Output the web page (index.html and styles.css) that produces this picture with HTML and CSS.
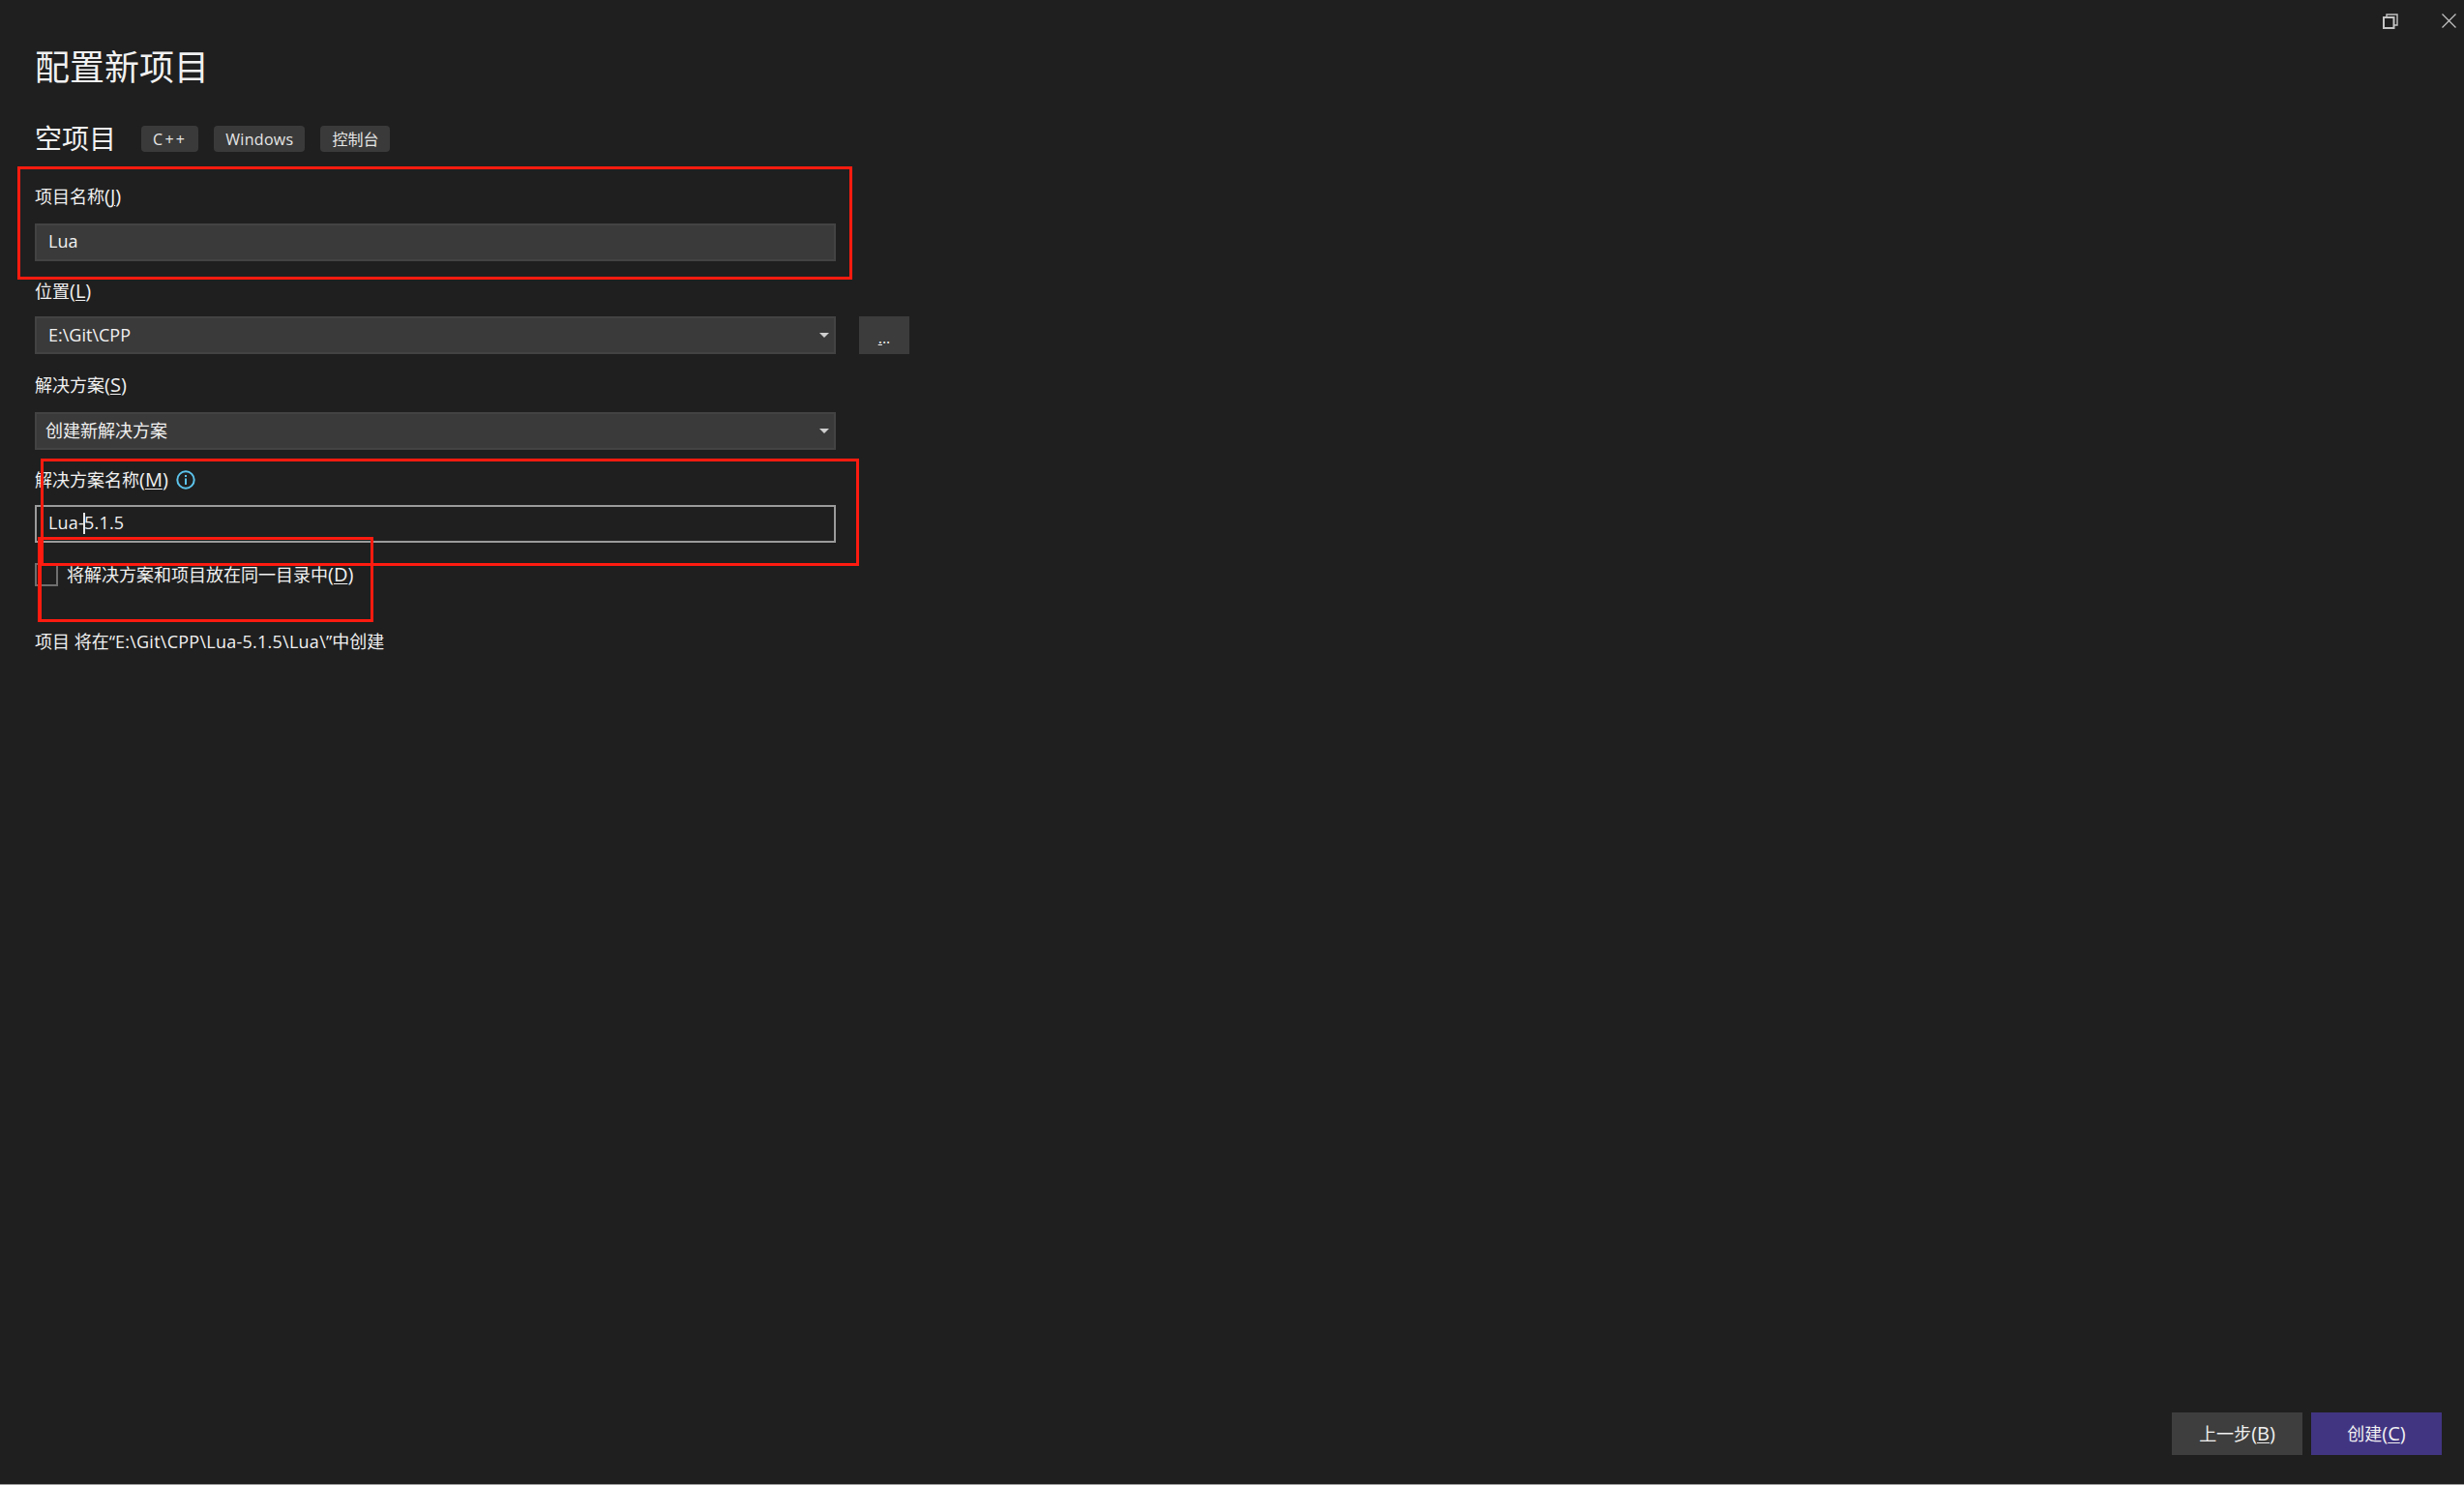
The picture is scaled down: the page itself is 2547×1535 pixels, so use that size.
FILE: index.html
```html
<!DOCTYPE html>
<html lang="zh-CN">
<head>
<meta charset="utf-8">
<title>配置新项目</title>
<link rel="stylesheet" href="styles.css">
</head>
<body>
<div class="page">
  <div class="topbar">
    <svg class="win-icon" width="16" height="16" viewBox="0 0 16 16" fill="none" stroke="#c4c4c4" stroke-width="1.4"><path d="M4 3.500V1h11v11h-3"/><rect x="1" y="4" width="10.500" height="11" fill="#1f1f1f" stroke-width="2"/></svg>
    <svg class="win-icon" width="15" height="15" viewBox="0 0 15 15" fill="none" stroke="#c4c4c4" stroke-width="1.2"><path d="M.5.5l14 14M14.500.5l-14 14"/></svg>
  </div>

  <main class="content">
    <h1 class="title">配置新项目</h1>
    <div class="template">
      <h2 class="template-name">空项目</h2>
      <span class="tag tag-spaced">C++</span>
      <span class="tag tag-latin">Windows</span>
      <span class="tag">控制台</span>
    </div>

    <div class="field field-first">
      <label class="label label-wide">项目名称<span class="key">(<u>J</u>)</span></label>
      <div class="control"><span>Lua</span></div>
    </div>

    <div class="field">
      <label class="label">位置<span class="key">(<u>L</u>)</span></label>
      <div class="control-row">
        <div class="control select select-path"><span>E:\Git\CPP</span><i class="arrow"></i></div>
        <div class="browse"><u>.</u>..</div>
      </div>
    </div>

    <div class="field">
      <label class="label label-wide">解决方案<span class="key">(<u>S</u>)</span></label>
      <div class="control select select-tight"><span>创建新解决方案</span><i class="arrow"></i></div>
    </div>

    <div class="field">
      <label class="label">解决方案名称<span class="key">(<u>M</u>)</span>
        <svg class="info" width="20" height="20" viewBox="0 0 20 20" fill="none"><circle cx="10" cy="10" r="8.700" stroke="#5cc4ec" stroke-width="2"/><rect x="9" y="8.500" width="2" height="6.500" fill="#5cc4ec"/><rect x="9" y="5" width="2" height="2" fill="#5cc4ec"/></svg>
      </label>
      <div class="control focused"><span class="spaced">Lua-<b class="caret"></b>5.1.5</span></div>
    </div>

    <div class="check-row">
      <span class="checkbox"></span>
      <span>将解决方案和项目放在同一目录中<span class="key">(<u>D</u>)</span></span>
    </div>

    <p class="hint">项目 将在“<span class="hint-path">E:\Git\CPP\Lua-5.1.5\Lua\</span>”中创建</p>
  </main>

  <footer class="footer">
    <div class="btn">上一步<span class="key">(<u>B</u>)</span></div>
    <div class="btn btn-primary">创建<span class="key">(<u>C</u>)</span></div>
  </footer>

  <div class="mark mark-name"></div>
  <div class="mark mark-solution"></div>
  <div class="mark mark-check"></div>
</div>
</body>
</html>
```

FILE: styles.css
```css
* { box-sizing: border-box; }
html, body { margin: 0; padding: 0; }
body {
  background: #1f1f1f;
  color: #f1f1f1;
  font-family: "Open Sans", "Noto Sans CJK SC", sans-serif;
  font-size: 18px;
}
.page {
  position: relative;
  width: 2547px;
  height: 1535px;
  display: flex;
  flex-direction: column;
  overflow: hidden;
}
.topbar {
  height: 44px;
  flex: none;
  display: flex;
  justify-content: flex-end;
  align-items: flex-start;
  gap: 45px;
  padding: 14px 8px 0 0;
}
.content { padding-left: 36px; flex: none; }
.title {
  margin: 0;
  height: 48px;
  padding-top: 2px;
  line-height: 48px;
  font-size: 36px;
  font-weight: 400;
}
.template {
  margin-top: 38px;
  height: 27px;
  display: flex;
  align-items: center;
}
.template-name {
  margin: 0 26px 0 0;
  font-size: 28px;
  font-weight: 400;
  line-height: 27px;
}
.tag {
  height: 27px;
  line-height: 28px;
  padding: 0 12px;
  margin-right: 16px;
  background: #3a3a3a;
  border-radius: 4px;
  font-size: 16px;
  color: #e6e6e6;
}
.tag-spaced { letter-spacing: 2.300px; }
.tag-latin { letter-spacing: 0.300px; }
.field { margin-top: 19px; }
.field-first { margin-top: 33px; }
.label {
  display: flex;
  align-items: center;
  height: 26px;
  padding-bottom: 2px;
  line-height: 24px;
  margin-bottom: 12px;
}
.label-wide { margin-bottom: 15px; padding-bottom: 0; }
.key { font-size: 20px; }
.key u { text-underline-offset: 2px; text-decoration-thickness: 1px; }
.info { margin-left: 8px; }
.control {
  width: 828px;
  height: 39px;
  display: flex;
  align-items: center;
  padding: 0 12px 4px;
  background: #3a3a3a;
  border: 2px solid #434343;
}
.select { justify-content: space-between; padding-right: 5px; }
.select-path { padding-bottom: 2px; }
.select-tight { padding-left: 9px; }
.arrow {
  width: 0;
  height: 0;
  border-left: 5px solid transparent;
  border-right: 5px solid transparent;
  border-top: 5px solid #cfcfcf;
  margin-top: 2px;
}
.select-tight .arrow { margin-top: 4px; }
.control-row { display: flex; gap: 24px; }
.browse {
  width: 52px;
  height: 39px;
  background: #3c3c3c;
  display: flex;
  justify-content: center;
  align-items: flex-end;
  font-size: 16px;
  line-height: 22px;
  padding-bottom: 6px;
}
.focused {
  background: #1f1f1f;
  border-color: #9b9b9b;
}
.spaced { letter-spacing: 0.200px; }
.caret {
  display: inline-block;
  width: 2px;
  height: 22px;
  margin: 0 -1px 0 -1px;
  background: #e8e8e8;
  vertical-align: -5px;
}
.check-row {
  margin-top: 21px;
  height: 24px;
  display: flex;
  align-items: center;
  gap: 9px;
  line-height: 22px;
}
.checkbox {
  width: 24px;
  height: 24px;
  border: 2px solid #6f6f6f;
}
.hint {
  margin: 45px 0 0;
  height: 26px;
  line-height: 24px;
}
.hint-path { letter-spacing: 0.250px; }
.footer {
  margin-top: auto;
  display: flex;
  justify-content: flex-end;
  gap: 9px;
  padding: 0 23px 30px 0;
  border-bottom: 1px solid #a0a0a0;
}
.btn {
  width: 135px;
  height: 44px;
  line-height: 44px;
  text-align: center;
  background: #3e3e3e;
}
.btn-primary { background: #413582; }
.mark {
  position: absolute;
  border: 3px solid #ff1b0f;
}
.mark-name { left: 18px; top: 172px; width: 863px; height: 117px; }
.mark-solution { left: 42px; top: 474px; width: 846px; height: 111px; }
.mark-check { left: 39px; top: 555px; width: 347px; height: 88px; border-left-width: 4px; }
```
